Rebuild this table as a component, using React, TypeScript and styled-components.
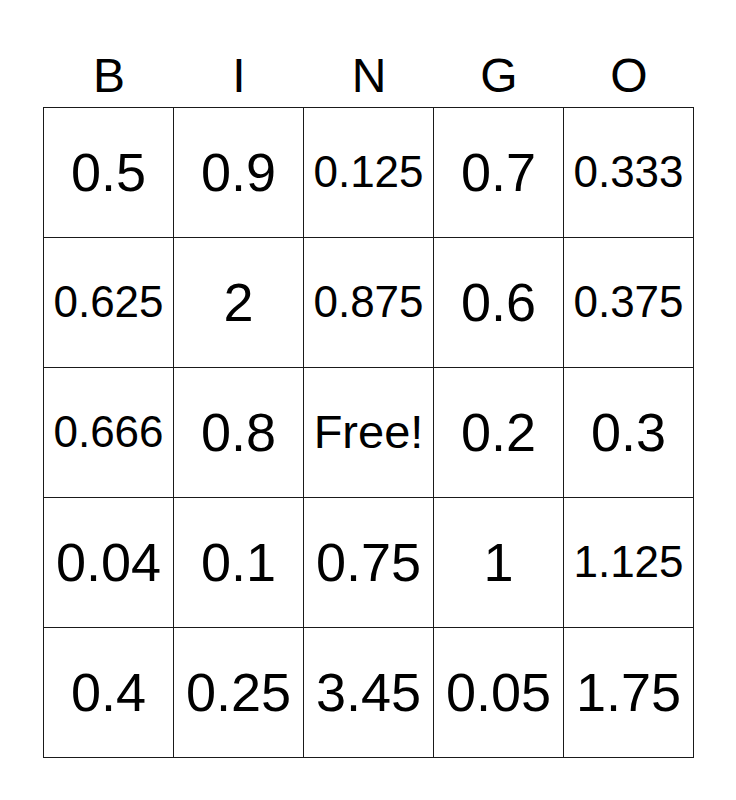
import styled, { createGlobalStyle } from 'styled-components'

const lineColor = '#1a1a1a'
const cellSize = 129

const GlobalStyle = createGlobalStyle`
  body {
    margin: 0;
    background: #fff;
    font-family: "Liberation Sans", Arial, sans-serif;
    color: #000;
  }
`

const Page = styled.div`
  padding: 52px 0 0 43px;
`

const Header = styled.div`
  display: grid;
  grid-template-columns: repeat(5, ${cellSize + 1}px);
  padding-left: 1px;
  margin-bottom: 7px;
`

const Letter = styled.div`
  font-size: 48px;
  line-height: 48px;
  text-align: center;
`

const Board = styled.div`
  display: grid;
  grid-template-columns: repeat(5, ${cellSize}px);
  grid-auto-rows: ${cellSize}px;
  gap: 1px;
  padding: 1px;
  background: ${lineColor};
  width: max-content;
`

const Cell = styled.div<{ size: number }>`
  background: #fff;
  display: flex;
  align-items: center;
  justify-content: center;
  padding-bottom: 2px;
  font-size: ${(p) => p.size}px;
  line-height: 1;
`

const letters = ['B', 'I', 'N', 'G', 'O']

const values = [
  ['0.5', '0.9', '0.125', '0.7', '0.333'],
  ['0.625', '2', '0.875', '0.6', '0.375'],
  ['0.666', '0.8', 'Free!', '0.2', '0.3'],
  ['0.04', '0.1', '0.75', '1', '1.125'],
  ['0.4', '0.25', '3.45', '0.05', '1.75'],
]

const sizeFor = (v: string) => {
  if (v === 'Free!') return 47
  if (v.length >= 5) return 44
  return 54
}

export default function App() {
  return (
    <Page>
      <GlobalStyle />
      <Header>
        {letters.map((l) => (
          <Letter key={l}>{l}</Letter>
        ))}
      </Header>
      <Board>
        {values.flat().map((v, i) => (
          <Cell key={i} size={sizeFor(v)}>
            {v}
          </Cell>
        ))}
      </Board>
    </Page>
  )
}
